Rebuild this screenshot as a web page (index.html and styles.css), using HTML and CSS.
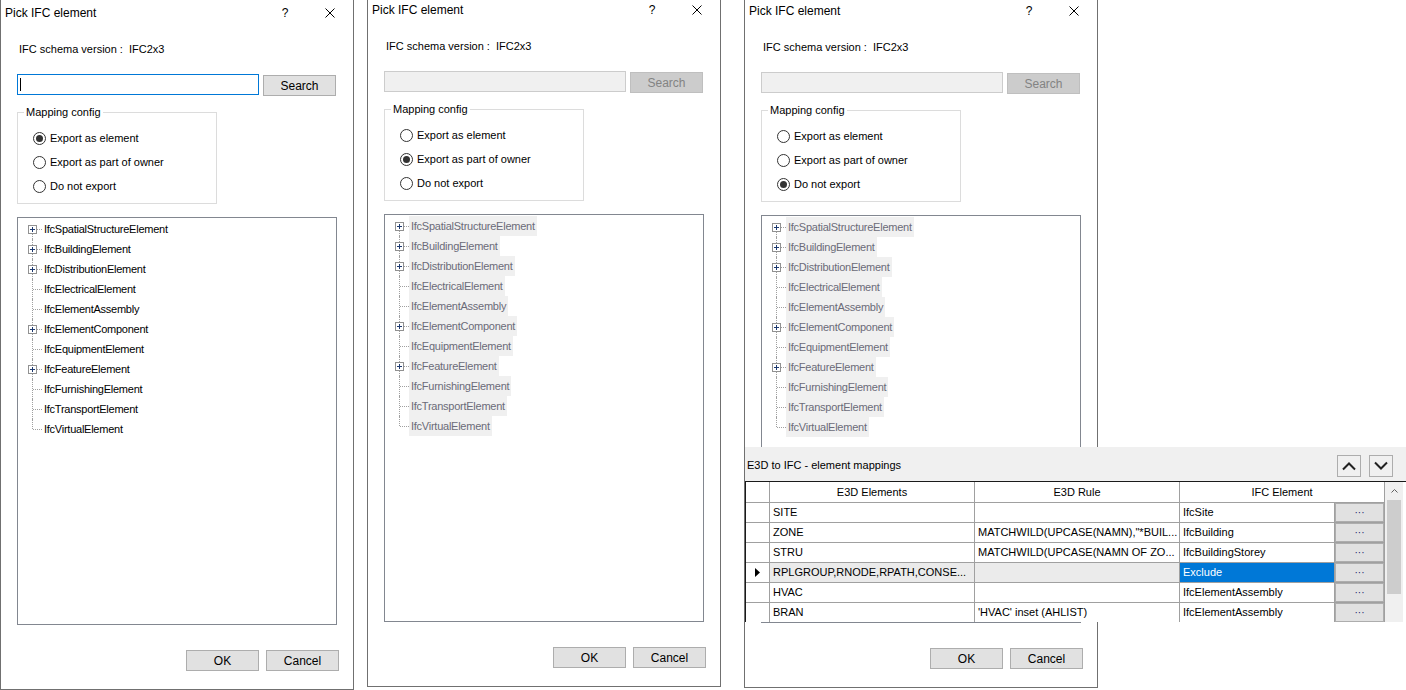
FILE: index.html
```html
<!DOCTYPE html>
<html>
<head>
<meta charset="utf-8">
<link rel="stylesheet" href="styles.css">
</head>
<body>
<div class="desk">

  <!-- Dialog 1 -->
  <div class="dlg d1">
    <div class="titlebar"><span class="ttl">Pick IFC element</span><span class="help">?</span><span class="close"><svg width="10" height="10" viewBox="0 0 10 10"><path d="M0.5 0.5L9.5 9.5M9.5 0.5L0.5 9.5" stroke="#000" stroke-width="1" fill="none"/></svg></span></div>
    <div class="schema">IFC schema version :&nbsp; IFC2x3</div>
    <div class="search-row">
      <div class="input focus"><span class="caret"></span></div>
      <div class="btn search">Search</div>
    </div>
    <div class="grp">
      <span class="legend">Mapping config</span>
      <div class="radio"><span class="rb on"></span>Export as element</div>
      <div class="radio"><span class="rb"></span>Export as part of owner</div>
      <div class="radio"><span class="rb"></span>Do not export</div>
    </div>
    <div class="tree">
      <div class="node first"><span class="exp"><svg width="9" height="9" viewBox="0 0 9 9"><rect x="0.5" y="0.5" width="8" height="8" fill="#fff" stroke="#919191"/><path d="M2 4.5h5M4.5 2v5" stroke="#1e3a70"/></svg></span><span class="lbl">IfcSpatialStructureElement</span></div>
      <div class="node"><span class="exp"><svg width="9" height="9" viewBox="0 0 9 9"><rect x="0.5" y="0.5" width="8" height="8" fill="#fff" stroke="#919191"/><path d="M2 4.5h5M4.5 2v5" stroke="#1e3a70"/></svg></span><span class="lbl">IfcBuildingElement</span></div>
      <div class="node"><span class="exp"><svg width="9" height="9" viewBox="0 0 9 9"><rect x="0.5" y="0.5" width="8" height="8" fill="#fff" stroke="#919191"/><path d="M2 4.5h5M4.5 2v5" stroke="#1e3a70"/></svg></span><span class="lbl">IfcDistributionElement</span></div>
      <div class="node"><span class="lbl">IfcElectricalElement</span></div>
      <div class="node"><span class="lbl">IfcElementAssembly</span></div>
      <div class="node"><span class="exp"><svg width="9" height="9" viewBox="0 0 9 9"><rect x="0.5" y="0.5" width="8" height="8" fill="#fff" stroke="#919191"/><path d="M2 4.5h5M4.5 2v5" stroke="#1e3a70"/></svg></span><span class="lbl">IfcElementComponent</span></div>
      <div class="node"><span class="lbl">IfcEquipmentElement</span></div>
      <div class="node"><span class="exp"><svg width="9" height="9" viewBox="0 0 9 9"><rect x="0.5" y="0.5" width="8" height="8" fill="#fff" stroke="#919191"/><path d="M2 4.5h5M4.5 2v5" stroke="#1e3a70"/></svg></span><span class="lbl">IfcFeatureElement</span></div>
      <div class="node"><span class="lbl">IfcFurnishingElement</span></div>
      <div class="node"><span class="lbl">IfcTransportElement</span></div>
      <div class="node last"><span class="lbl">IfcVirtualElement</span></div>
    </div>
    <div class="actions"><div class="btn">OK</div><div class="btn">Cancel</div></div>
  </div>

  <!-- Dialog 2 -->
  <div class="dlg d2 dis">
    <div class="titlebar"><span class="ttl">Pick IFC element</span><span class="help">?</span><span class="close"><svg width="10" height="10" viewBox="0 0 10 10"><path d="M0.5 0.5L9.5 9.5M9.5 0.5L0.5 9.5" stroke="#000" stroke-width="1" fill="none"/></svg></span></div>
    <div class="schema">IFC schema version :&nbsp; IFC2x3</div>
    <div class="search-row">
      <div class="input off"></div>
      <div class="btn search off">Search</div>
    </div>
    <div class="grp">
      <span class="legend">Mapping config</span>
      <div class="radio"><span class="rb"></span>Export as element</div>
      <div class="radio"><span class="rb on"></span>Export as part of owner</div>
      <div class="radio"><span class="rb"></span>Do not export</div>
    </div>
    <div class="tree">
      <div class="node first"><span class="exp"><svg width="9" height="9" viewBox="0 0 9 9"><rect x="0.5" y="0.5" width="8" height="8" fill="#fff" stroke="#919191"/><path d="M2 4.5h5M4.5 2v5" stroke="#1e3a70"/></svg></span><span class="lbl">IfcSpatialStructureElement</span></div>
      <div class="node"><span class="exp"><svg width="9" height="9" viewBox="0 0 9 9"><rect x="0.5" y="0.5" width="8" height="8" fill="#fff" stroke="#919191"/><path d="M2 4.5h5M4.5 2v5" stroke="#1e3a70"/></svg></span><span class="lbl">IfcBuildingElement</span></div>
      <div class="node"><span class="exp"><svg width="9" height="9" viewBox="0 0 9 9"><rect x="0.5" y="0.5" width="8" height="8" fill="#fff" stroke="#919191"/><path d="M2 4.5h5M4.5 2v5" stroke="#1e3a70"/></svg></span><span class="lbl">IfcDistributionElement</span></div>
      <div class="node"><span class="lbl">IfcElectricalElement</span></div>
      <div class="node"><span class="lbl">IfcElementAssembly</span></div>
      <div class="node"><span class="exp"><svg width="9" height="9" viewBox="0 0 9 9"><rect x="0.5" y="0.5" width="8" height="8" fill="#fff" stroke="#919191"/><path d="M2 4.5h5M4.5 2v5" stroke="#1e3a70"/></svg></span><span class="lbl">IfcElementComponent</span></div>
      <div class="node"><span class="lbl">IfcEquipmentElement</span></div>
      <div class="node"><span class="exp"><svg width="9" height="9" viewBox="0 0 9 9"><rect x="0.5" y="0.5" width="8" height="8" fill="#fff" stroke="#919191"/><path d="M2 4.5h5M4.5 2v5" stroke="#1e3a70"/></svg></span><span class="lbl">IfcFeatureElement</span></div>
      <div class="node"><span class="lbl">IfcFurnishingElement</span></div>
      <div class="node"><span class="lbl">IfcTransportElement</span></div>
      <div class="node last"><span class="lbl">IfcVirtualElement</span></div>
    </div>
    <div class="actions"><div class="btn">OK</div><div class="btn">Cancel</div></div>
  </div>

  <!-- Dialog 3 -->
  <div class="dlg d3 dis">
    <div class="titlebar"><span class="ttl">Pick IFC element</span><span class="help">?</span><span class="close"><svg width="10" height="10" viewBox="0 0 10 10"><path d="M0.5 0.5L9.5 9.5M9.5 0.5L0.5 9.5" stroke="#000" stroke-width="1" fill="none"/></svg></span></div>
    <div class="schema">IFC schema version :&nbsp; IFC2x3</div>
    <div class="search-row">
      <div class="input off"></div>
      <div class="btn search off">Search</div>
    </div>
    <div class="grp">
      <span class="legend">Mapping config</span>
      <div class="radio"><span class="rb"></span>Export as element</div>
      <div class="radio"><span class="rb"></span>Export as part of owner</div>
      <div class="radio"><span class="rb on"></span>Do not export</div>
    </div>
    <div class="tree">
      <div class="node first"><span class="exp"><svg width="9" height="9" viewBox="0 0 9 9"><rect x="0.5" y="0.5" width="8" height="8" fill="#fff" stroke="#919191"/><path d="M2 4.5h5M4.5 2v5" stroke="#1e3a70"/></svg></span><span class="lbl">IfcSpatialStructureElement</span></div>
      <div class="node"><span class="exp"><svg width="9" height="9" viewBox="0 0 9 9"><rect x="0.5" y="0.5" width="8" height="8" fill="#fff" stroke="#919191"/><path d="M2 4.5h5M4.5 2v5" stroke="#1e3a70"/></svg></span><span class="lbl">IfcBuildingElement</span></div>
      <div class="node"><span class="exp"><svg width="9" height="9" viewBox="0 0 9 9"><rect x="0.5" y="0.5" width="8" height="8" fill="#fff" stroke="#919191"/><path d="M2 4.5h5M4.5 2v5" stroke="#1e3a70"/></svg></span><span class="lbl">IfcDistributionElement</span></div>
      <div class="node"><span class="lbl">IfcElectricalElement</span></div>
      <div class="node"><span class="lbl">IfcElementAssembly</span></div>
      <div class="node"><span class="exp"><svg width="9" height="9" viewBox="0 0 9 9"><rect x="0.5" y="0.5" width="8" height="8" fill="#fff" stroke="#919191"/><path d="M2 4.5h5M4.5 2v5" stroke="#1e3a70"/></svg></span><span class="lbl">IfcElementComponent</span></div>
      <div class="node"><span class="lbl">IfcEquipmentElement</span></div>
      <div class="node"><span class="exp"><svg width="9" height="9" viewBox="0 0 9 9"><rect x="0.5" y="0.5" width="8" height="8" fill="#fff" stroke="#919191"/><path d="M2 4.5h5M4.5 2v5" stroke="#1e3a70"/></svg></span><span class="lbl">IfcFeatureElement</span></div>
      <div class="node"><span class="lbl">IfcFurnishingElement</span></div>
      <div class="node"><span class="lbl">IfcTransportElement</span></div>
      <div class="node last"><span class="lbl">IfcVirtualElement</span></div>
    </div>
    <div class="actions"><div class="btn">OK</div><div class="btn">Cancel</div></div>
  </div>

  <!-- Mapping grid panel overlay -->
  <div class="panel">
    <div class="panel-head">
      <span class="panel-title">E3D to IFC - element mappings</span>
      <span class="arrow-btn"><svg width="16" height="10" viewBox="0 0 16 10"><path d="M2 8.5L8 2.5L14 8.5" stroke="#222" stroke-width="2" fill="none"/></svg></span>
      <span class="arrow-btn"><svg width="16" height="10" viewBox="0 0 16 10"><path d="M2 1.5L8 7.5L14 1.5" stroke="#222" stroke-width="2" fill="none"/></svg></span>
    </div>
    <div class="grid">
      <div class="grid-body">
        <div class="grow ghead">
          <div class="cell c0"></div>
          <div class="cell c1 hc">E3D Elements</div>
          <div class="cell c2 hc">E3D Rule</div>
          <div class="cell c34 hc">IFC Element</div>
        </div>
        <div class="grow">
          <div class="cell c0"></div>
          <div class="cell c1">SITE</div>
          <div class="cell c2"></div>
          <div class="cell c3">IfcSite</div>
          <div class="cell c4"><span class="dots">···</span></div>
        </div>
        <div class="grow">
          <div class="cell c0"></div>
          <div class="cell c1">ZONE</div>
          <div class="cell c2">MATCHWILD(UPCASE(NAMN),"*BUIL...</div>
          <div class="cell c3">IfcBuilding</div>
          <div class="cell c4"><span class="dots">···</span></div>
        </div>
        <div class="grow">
          <div class="cell c0"></div>
          <div class="cell c1">STRU</div>
          <div class="cell c2">MATCHWILD(UPCASE(NAMN OF ZO...</div>
          <div class="cell c3">IfcBuildingStorey</div>
          <div class="cell c4"><span class="dots">···</span></div>
        </div>
        <div class="grow cur">
          <div class="cell c0"><svg width="5" height="9" viewBox="0 0 5 9"><path d="M0 0L5 4.5L0 9Z" fill="#000"/></svg></div>
          <div class="cell c1">RPLGROUP,RNODE,RPATH,CONSE...</div>
          <div class="cell c2"></div>
          <div class="cell c3 sel">Exclude</div>
          <div class="cell c4"><span class="dots">···</span></div>
        </div>
        <div class="grow">
          <div class="cell c0"></div>
          <div class="cell c1">HVAC</div>
          <div class="cell c2"></div>
          <div class="cell c3">IfcElementAssembly</div>
          <div class="cell c4"><span class="dots">···</span></div>
        </div>
        <div class="grow">
          <div class="cell c0"></div>
          <div class="cell c1">BRAN</div>
          <div class="cell c2">'HVAC' inset (AHLIST)</div>
          <div class="cell c3">IfcElementAssembly</div>
          <div class="cell c4"><span class="dots">···</span></div>
        </div>
      </div>
      <div class="vscroll">
        <div class="sarrow"><svg width="7" height="4" viewBox="0 0 7 4"><path d="M0.5 3.5L3.5 0.5L6.5 3.5" stroke="#606060" fill="none"/></svg></div>
        <div class="thumb"></div>
      </div>
    </div>
  </div>

</div>
</body>
</html>
```

FILE: styles.css
```css
html, body {
  margin: 0;
  padding: 0;
  background: #fff;
}
body {
  width: 1406px;
  height: 690px;
  overflow: hidden;
  font-family: "Liberation Sans", Arial, sans-serif;
  font-size: 11px;
  color: #000;
}
.desk {
  position: relative;
  width: 1406px;
  height: 690px;
}

/* ---------- dialog ---------- */
.dlg {
  position: absolute;
  top: 0;
  box-sizing: border-box;
  width: 354px;
  background: #fff;
  border: 1px solid #707070;
  border-top: none;
  display: flex;
  flex-direction: column;
}
.d1 { left: 0; height: 690px; padding-top: 3px; }
.d2 { left: 367px; height: 687px; }
.d3 { left: 744px; height: 688px; padding-top: 1px; }

.titlebar {
  display: flex;
  align-items: center;
  height: 20px;
  padding: 0 13px 0 4px;
  font-size: 12px;
}
.ttl { flex: 1; }
.help { width: 20px; text-align: center; }
.close {
  width: 20px;
  margin-left: 25px;
  display: flex;
  justify-content: center;
  align-items: center;
  height: 10px;
}
.close svg { display: block; }

.schema {
  margin-top: 19px;
  height: 14px;
  line-height: 14px;
  padding-left: 18px;
}

.search-row {
  display: flex;
  align-items: flex-start;
  margin-top: 18px;
  padding-left: 16px;
  height: 22px;
}
.input {
  box-sizing: border-box;
  width: 242px;
  height: 21px;
  border: 1px solid #7a7a7a;
  background: #fff;
  position: relative;
}
.input.focus { border-color: #0078d7; }
.input.off { background: #f0f0f0; border-color: #cccccc; }
.caret {
  position: absolute;
  left: 2px;
  top: 3px;
  width: 1px;
  height: 13px;
  background: #000;
}
.btn {
  box-sizing: border-box;
  width: 73px;
  height: 21px;
  border: 1px solid #adadad;
  background: #e1e1e1;
  display: flex;
  align-items: center;
  justify-content: center;
  font-size: 12px;
}
.btn.search { margin-left: 4px; margin-top: 1px; }
.btn.off { background: #cccccc; border-color: #bfbfbf; color: #838383; }

.grp {
  position: relative;
  box-sizing: border-box;
  margin: 16px 0 0 16px;
  width: 200px;
  height: 92px;
  border: 1px solid #dcdcdc;
  padding: 13px 0 0 15px;
}
.legend {
  position: absolute;
  left: 6px;
  top: -8px;
  padding: 0 2px;
  background: #fff;
  line-height: 14px;
}
.radio {
  display: flex;
  align-items: center;
  height: 24px;
}
.rb {
  box-sizing: border-box;
  width: 13px;
  height: 13px;
  border: 1px solid #333;
  border-radius: 50%;
  background: #fff;
  margin-right: 4px;
  display: flex;
  align-items: center;
  justify-content: center;
}
.rb.on::after {
  content: "";
  width: 7px;
  height: 7px;
  border-radius: 50%;
  background: #333;
}

/* ---------- tree ---------- */
.tree {
  box-sizing: border-box;
  margin: 13px 0 0 16px;
  width: 320px;
  height: 408px;
  border: 1px solid #828790;
  padding-top: 1px;
  background: #fff;
}
.node {
  position: relative;
  height: 20px;
  line-height: 20px;
  padding-left: 24px;
  white-space: nowrap;
}
.node::before {
  content: "";
  position: absolute;
  left: 14px;
  top: 0;
  bottom: 0;
  border-left: 1px dotted #a0a0a0;
}
.node.first::before { top: 10px; }
.node.last::before { bottom: 10px; }
.node::after {
  content: "";
  position: absolute;
  left: 15px;
  top: 10px;
  width: 9px;
  border-top: 1px dotted #a0a0a0;
}
.exp {
  position: absolute;
  left: 10px;
  top: 6px;
  width: 9px;
  height: 9px;
  z-index: 1;
}
.exp svg { display: block; }
.lbl {
  display: inline-block;
  padding: 0 2px;
  letter-spacing: -0.25px;
}
.dis .lbl {
  background: #f0f0f0;
  color: #6b6b78;
}

.actions {
  display: flex;
  justify-content: flex-end;
  gap: 7px;
  margin-top: 25px;
  padding-right: 14px;
}

/* ---------- mapping panel ---------- */
.panel {
  position: absolute;
  left: 745px;
  top: 447px;
  width: 661px;
  height: 175px;
  background: #f0f0f0;
  overflow: hidden;
  z-index: 5;
}
.panel-head {
  display: flex;
  align-items: center;
  height: 34px;
  padding-left: 2px;
}
.panel-title { flex: 1; margin-top: 2px; }
.arrow-btn {
  box-sizing: border-box;
  width: 24px;
  height: 22px;
  border: 1px solid #adadad;
  background: #f0f0f0;
  display: flex;
  align-items: center;
  justify-content: center;
  margin-right: 8px;
  margin-top: 3px;
}
.arrow-btn:last-child { margin-right: 13px; }
.arrow-btn svg { display: block; }

.grid {
  display: flex;
  border-top: 1px solid #1a1a1a;
  border-left: 1px solid #1a1a1a;
  background: #fff;
  height: 141px;
}
.grid-body { width: 639px; }
.grow {
  display: flex;
  height: 20px;
}
.ghead { height: 21px; }
.cell {
  box-sizing: border-box;
  border-right: 1px solid #a0a0a0;
  border-bottom: 1px solid #a0a0a0;
  padding-left: 3px;
  line-height: 19px;
  white-space: nowrap;
  overflow: hidden;
  background: #fff;
}
.ghead .cell { line-height: 20px; }
.c0 { width: 24px; padding: 0; display: flex; align-items: center; justify-content: center; }
.c1 { width: 205px; }
.c2 { width: 205px; }
.c3 { width: 155px; }
.c4 { width: 50px; padding: 0; }
.c34 { width: 205px; }
.hc { text-align: center; padding-left: 0; }
.cur .c1, .cur .c2 { background: #ebebeb; }
.cell.sel { background: #0078d7; color: #fff; }
.dots {
  box-sizing: border-box;
  display: flex;
  align-items: center;
  justify-content: center;
  height: 19px;
  background: #e1e1e1;
  border: 1px solid #adadad;
  color: #1a1a6a;
  font-size: 10px;
  letter-spacing: 0;
}
.vscroll {
  width: 18px;
  background: #f0f0f0;
  display: flex;
  flex-direction: column;
  align-items: center;
}
.sarrow {
  height: 17px;
  display: flex;
  align-items: center;
  justify-content: center;
}
.sarrow svg { display: block; }
.thumb {
  width: 14px;
  height: 94px;
  background: #cdcdcd;
  margin-top: 1px;
}
```
